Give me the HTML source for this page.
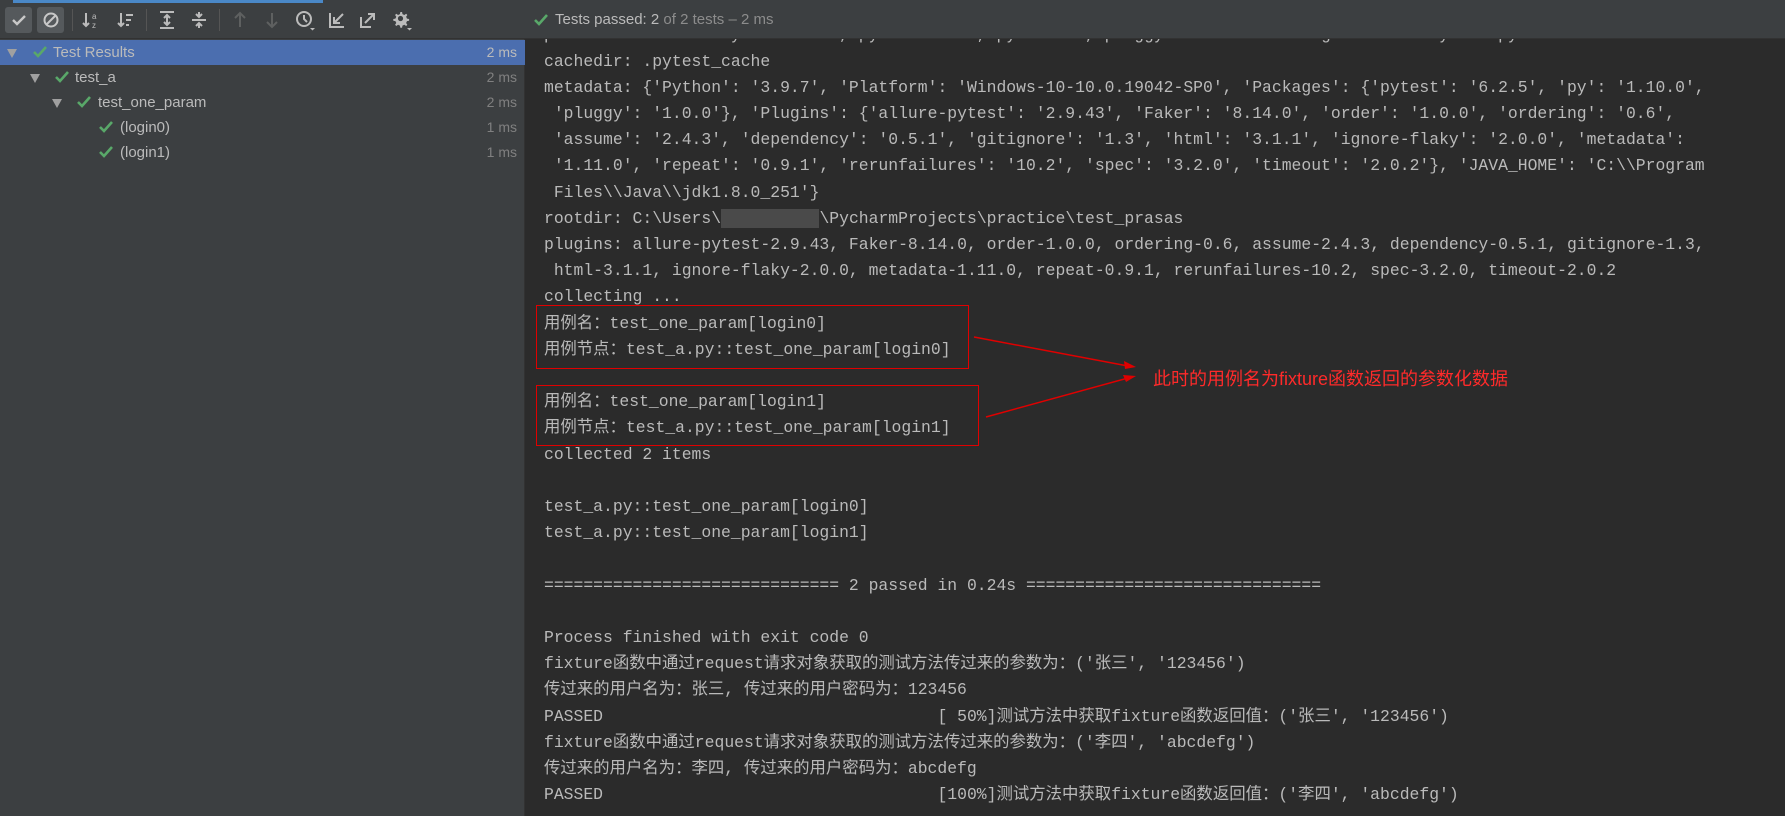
<!DOCTYPE html>
<html><head><meta charset="utf-8"><style>
*{margin:0;padding:0;box-sizing:border-box}
body{width:1785px;height:816px;overflow:hidden;background:#2b2b2b;position:relative;font-family:"Liberation Sans","Noto Sans CJK SC",sans-serif}
#tb{position:absolute;left:0;top:0;width:1785px;height:39px;background:#3c3f41;border-bottom:1px solid #323232;z-index:5}
#blue{position:absolute;left:13px;top:0;width:310px;height:3px;background:#4a88c7}
.btn{position:absolute;top:7px;width:27px;height:26px;background:#55595c;border-radius:3px}
.sep{position:absolute;top:9px;width:1px;height:22px;background:#555}
.ic{position:absolute;top:9px;width:22px;height:22px}
#left{position:absolute;left:0;top:39px;width:525px;height:777px;background:#3c3f41;border-right:1px solid #323232}
.row{position:absolute;left:0;width:525px;height:25px;color:#bbbbbb;font-size:15px;line-height:25px}
.row .ms{position:absolute;right:8px;top:0;color:#808080;font-size:14px}
.tri{position:absolute;top:9px;width:0;height:0;border-left:5px solid transparent;border-right:5px solid transparent;border-top:9px solid #a0a0a0}
.ck{position:absolute;top:5px;width:14px;height:14px}
.row .t{position:absolute;top:0}
#con{position:absolute;left:544px;top:22.3px;font-family:"Liberation Mono","Noto Sans CJK SC",monospace;font-size:16.4px;line-height:26.2px;color:#bababa;white-space:pre}
.box{position:absolute;border:1px solid #e00000}
#note{position:absolute;left:1153px;top:365px;font-size:18px;color:#ff2a2a;font-family:"Liberation Sans","Noto Sans CJK SC",sans-serif}
</style></head><body>
<div id="tb">
<div id="blue"></div>
<div class="btn" style="left:5px"></div>
<svg class="ic" style="left:8px;top:9px" viewBox="0 0 22 22"><path d="M5 11l4 4 8-8" stroke="#c8c8c8" stroke-width="2.4" fill="none"/></svg>
<div class="btn" style="left:37px"></div>
<svg class="ic" style="left:40px;top:9px" viewBox="0 0 22 22"><circle cx="11" cy="11" r="6.5" stroke="#c8c8c8" stroke-width="2" fill="none"/><path d="M7 15l8-8" stroke="#c8c8c8" stroke-width="2"/></svg>
<div class="sep" style="left:72px"></div>
<svg class="ic" style="left:80px" viewBox="0 0 22 22"><path d="M6 4v13M3 14l3 3 3-3" stroke="#bbb" stroke-width="2" fill="none"/><text x="12" y="10" font-size="8" fill="#bbb" font-family="Liberation Sans">a</text><text x="12" y="19" font-size="8" fill="#bbb" font-family="Liberation Sans">z</text></svg>
<svg class="ic" style="left:115px" viewBox="0 0 22 22"><path d="M6 4v13M3 14l3 3 3-3" stroke="#bbb" stroke-width="2" fill="none"/><path d="M11 6h7M11 11h5M11 16h3" stroke="#bbb" stroke-width="2"/></svg>
<div class="sep" style="left:146px"></div>
<svg class="ic" style="left:156px" viewBox="0 0 22 22"><path d="M4 3h14M4 19h14M11 6v10M8 9l3-3 3 3M8 13l3 3 3-3" stroke="#bbb" stroke-width="2" fill="none"/></svg>
<svg class="ic" style="left:188px" viewBox="0 0 22 22"><path d="M4 11h14M11 3v5M8 5l3 3 3-3M11 19v-5M8 17l3-3 3 3" stroke="#bbb" stroke-width="2" fill="none"/></svg>
<div class="sep" style="left:219px"></div>
<svg class="ic" style="left:229px" viewBox="0 0 22 22"><path d="M11 18V4M6 9l5-5 5 5" stroke="#5e6060" stroke-width="2" fill="none"/></svg>
<svg class="ic" style="left:261px" viewBox="0 0 22 22"><path d="M11 4v14M6 13l5 5 5-5" stroke="#5e6060" stroke-width="2" fill="none"/></svg>
<svg class="ic" style="left:294px" viewBox="0 0 22 22"><circle cx="10" cy="10" r="7" stroke="#bbb" stroke-width="2" fill="none"/><path d="M10 6v4l3 3" stroke="#bbb" stroke-width="2" fill="none"/><path d="M16 19h5l-2.5 2.5z" fill="#bbb"/></svg>
<svg class="ic" style="left:326px" viewBox="0 0 22 22"><path d="M4 4v14h14M8 14l9-9M8 8v6h6" stroke="#bbb" stroke-width="2" fill="none"/></svg>
<svg class="ic" style="left:357px" viewBox="0 0 22 22"><path d="M4 8v10h10M8 14l9-9M11 5h6v6" stroke="#bbb" stroke-width="2" fill="none"/></svg>
<svg class="ic" style="left:391px" viewBox="0 0 22 22"><path d="M10 2.5l2 0 .5 2.5 2.2 1 2.1-1.4 1.4 1.4-1.4 2.1 1 2.2 2.5.5v2l-2.5.5-1 2.2 1.4 2.1-1.4 1.4-2.1-1.4-2.2 1-.5 2.5h-2l-.5-2.5-2.2-1-2.1 1.4-1.4-1.4 1.4-2.1-1-2.2-2.5-.5v-2l2.5-.5 1-2.2-1.4-2.1 1.4-1.4 2.1 1.4 2.2-1z" fill="#bbb" transform="scale(.85) translate(1 1)"/><circle cx="9.5" cy="9.5" r="2.6" fill="#3c3f41"/><path d="M16 19h5l-2.5 2.5z" fill="#bbb"/></svg>
<svg style="position:absolute;left:533px;top:12px" width="16" height="16" viewBox="0 0 16 16"><path d="M2 8l4 4 8-9" stroke="#59a869" stroke-width="2.6" fill="none"/></svg>
<div style="position:absolute;left:555px;top:10px;font-size:15px;color:#bbbbbb;line-height:20px">Tests passed: 2 <span style="color:#8c8c8c">of 2 tests – 2 ms</span></div>
</div>

<div id="left">
<div class="row" style="top:1px;background:#4b6eaf"><div class="tri" style="left:7px"></div><svg class="ck" style="left:33px" viewBox="0 0 14 14"><path d="M1 7l4 4 8-9" stroke="#59a869" stroke-width="2.6" fill="none"/></svg><span class="t" style="left:53px">Test Results</span><span class="ms" style="color:#bbb">2 ms</span></div>
<div class="row" style="top:26px"><div class="tri" style="left:30px"></div><svg class="ck" style="left:55px" viewBox="0 0 14 14"><path d="M1 7l4 4 8-9" stroke="#59a869" stroke-width="2.6" fill="none"/></svg><span class="t" style="left:75px">test_a</span><span class="ms">2 ms</span></div>
<div class="row" style="top:51px"><div class="tri" style="left:52px"></div><svg class="ck" style="left:77px" viewBox="0 0 14 14"><path d="M1 7l4 4 8-9" stroke="#59a869" stroke-width="2.6" fill="none"/></svg><span class="t" style="left:98px">test_one_param</span><span class="ms">2 ms</span></div>
<div class="row" style="top:76px"><svg class="ck" style="left:99px" viewBox="0 0 14 14"><path d="M1 7l4 4 8-9" stroke="#59a869" stroke-width="2.6" fill="none"/></svg><span class="t" style="left:120px">(login0)</span><span class="ms">1 ms</span></div>
<div class="row" style="top:101px"><svg class="ck" style="left:99px" viewBox="0 0 14 14"><path d="M1 7l4 4 8-9" stroke="#59a869" stroke-width="2.6" fill="none"/></svg><span class="t" style="left:120px">(login1)</span><span class="ms">1 ms</span></div>
</div>

<div id="con">platform win32 -- Python 3.9.7, pytest-6.2.5, py-1.10.0, pluggy-1.0.0 -- C:\Program Files\Python\python.exe
cachedir: .pytest_cache
metadata: {'Python': '3.9.7', 'Platform': 'Windows-10-10.0.19042-SP0', 'Packages': {'pytest': '6.2.5', 'py': '1.10.0',
 'pluggy': '1.0.0'}, 'Plugins': {'allure-pytest': '2.9.43', 'Faker': '8.14.0', 'order': '1.0.0', 'ordering': '0.6',
 'assume': '2.4.3', 'dependency': '0.5.1', 'gitignore': '1.3', 'html': '3.1.1', 'ignore-flaky': '2.0.0', 'metadata':
 '1.11.0', 'repeat': '0.9.1', 'rerunfailures': '10.2', 'spec': '3.2.0', 'timeout': '2.0.2'}, 'JAVA_HOME': 'C:\\Program
 Files\\Java\\jdk1.8.0_251'}
rootdir: C:\Users\<span style="background:#4a4a4a;color:transparent">          </span>\PycharmProjects\practice\test_prasas
plugins: allure-pytest-2.9.43, Faker-8.14.0, order-1.0.0, ordering-0.6, assume-2.4.3, dependency-0.5.1, gitignore-1.3,
 html-3.1.1, ignore-flaky-2.0.0, metadata-1.11.0, repeat-0.9.1, rerunfailures-10.2, spec-3.2.0, timeout-2.0.2
collecting ...
用例名：test_one_param[login0]
用例节点：test_a.py::test_one_param[login0]

用例名：test_one_param[login1]
用例节点：test_a.py::test_one_param[login1]
collected 2 items

test_a.py::test_one_param[login0]
test_a.py::test_one_param[login1]

============================== 2 passed in 0.24s ==============================

Process finished with exit code 0
fixture函数中通过request请求对象获取的测试方法传过来的参数为：('张三', '123456')
传过来的用户名为：张三, 传过来的用户密码为：123456
PASSED                                  [ 50%]测试方法中获取fixture函数返回值：('张三', '123456')
fixture函数中通过request请求对象获取的测试方法传过来的参数为：('李四', 'abcdefg')
传过来的用户名为：李四, 传过来的用户密码为：abcdefg
PASSED                                  [100%]测试方法中获取fixture函数返回值：('李四', 'abcdefg')</div>

<div class="box" style="left:536px;top:305px;width:433px;height:64px"></div>
<div class="box" style="left:536px;top:385px;width:443px;height:61px"></div>
<svg style="position:absolute;left:0;top:0" width="1785" height="816"><path d="M974 337L1128 366" stroke="#e00000" stroke-width="1.5"/><path d="M1136 367l-12-6 1 8z" fill="#e00000"/><path d="M986 417L1128 378" stroke="#e00000" stroke-width="1.5"/><path d="M1136 376l-13-1 3 7z" fill="#e00000"/></svg>
<div id="note">此时的用例名为fixture函数返回的参数化数据</div>
</body></html>
